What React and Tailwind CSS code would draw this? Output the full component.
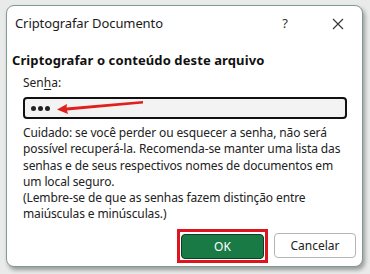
export default function App() {
  const font = { fontFamily: '"Noto Sans", "Open Sans", sans-serif' }
  return (
    <div className="w-[370px] h-[274px] bg-[#e9ebea] overflow-hidden pt-[5px] pl-[6px]" style={font}>
      <div className="w-[357px] h-[262px] bg-white border border-[#7f9c8e] rounded-[8px] shadow-[2px_3px_4px_rgba(0,0,0,0.35)] flex flex-col">
        {/* title bar */}
        <div className="h-[34px] flex items-center pl-[8px] pr-[18px] pt-[1px]">
          <span className="text-[13px] text-[#1b1b1b] tracking-[-0.1px]">Criptografar Documento</span>
          <span className="ml-auto text-[13px] text-[#333] mr-[44px]">?</span>
          <svg viewBox="0 0 12 12" className="w-[12px] h-[12px]" stroke="#333" strokeWidth="1.1" fill="none">
            <path d="M1 1 L11 11 M11 1 L1 11" />
          </svg>
        </div>

        <div className="pl-[5px] pt-[11px]">
          <h1 className="text-[13px] font-bold text-[#111] leading-[18px] tracking-[0.1px]">Criptografar o conteúdo deste arquivo</h1>
        </div>

        <div className="pl-[16px] pr-[15px] pt-[5px]">
          <div className="text-[12px] text-[#222] leading-[18px]">
            Sen<span className="underline underline-offset-2">h</span>a:
          </div>
          <div className="relative mt-[5px] h-[22px] w-[324px] rounded-[4px] border-2 border-[#111] bg-[#f3f3f3] flex items-center pl-[6px] gap-[2px]">
            <span className="w-[5px] h-[5px] rounded-full bg-[#222]" />
            <span className="w-[5px] h-[5px] rounded-full bg-[#222]" />
            <span className="w-[5px] h-[5px] rounded-full bg-[#222]" />
            <svg className="absolute left-[30px] top-[-2px] w-[90px] h-[20px]" viewBox="0 0 90 20">
              <path d="M2 12.5 L12 7 L11.5 10.5 L88 4 L88 6.5 L12 13.5 L13 17 Z" fill="#e0201c" />
            </svg>
          </div>
          <p className="mt-[6px] text-[12px] leading-[16.3px] text-[#222] tracking-[-0.12px]">
            Cuidado: se você perder ou esquecer a senha, não será possível recuperá-la. Recomenda-se manter uma lista das senhas e de seus respectivos nomes de documentos em um local seguro.
            <br />
            (Lembre-se de que as senhas fazem distinção entre maiúsculas e minúsculas.)
          </p>
        </div>

        <div className="mt-auto mb-[3px] flex justify-end items-center pr-[6px] gap-[6px]">
          <div className="border-[3px] border-[#e0141e] p-[1px]">
            <button className="w-[83px] h-[25px] rounded-[4px] bg-[#1a7a45] border border-[#0d3f22] text-white text-[12px]">OK</button>
          </div>
          <button className="w-[82px] h-[25px] rounded-[4px] bg-white border border-[#b5b5b5] text-[#222] text-[12px]">Cancelar</button>
        </div>
      </div>
    </div>
  )
}
